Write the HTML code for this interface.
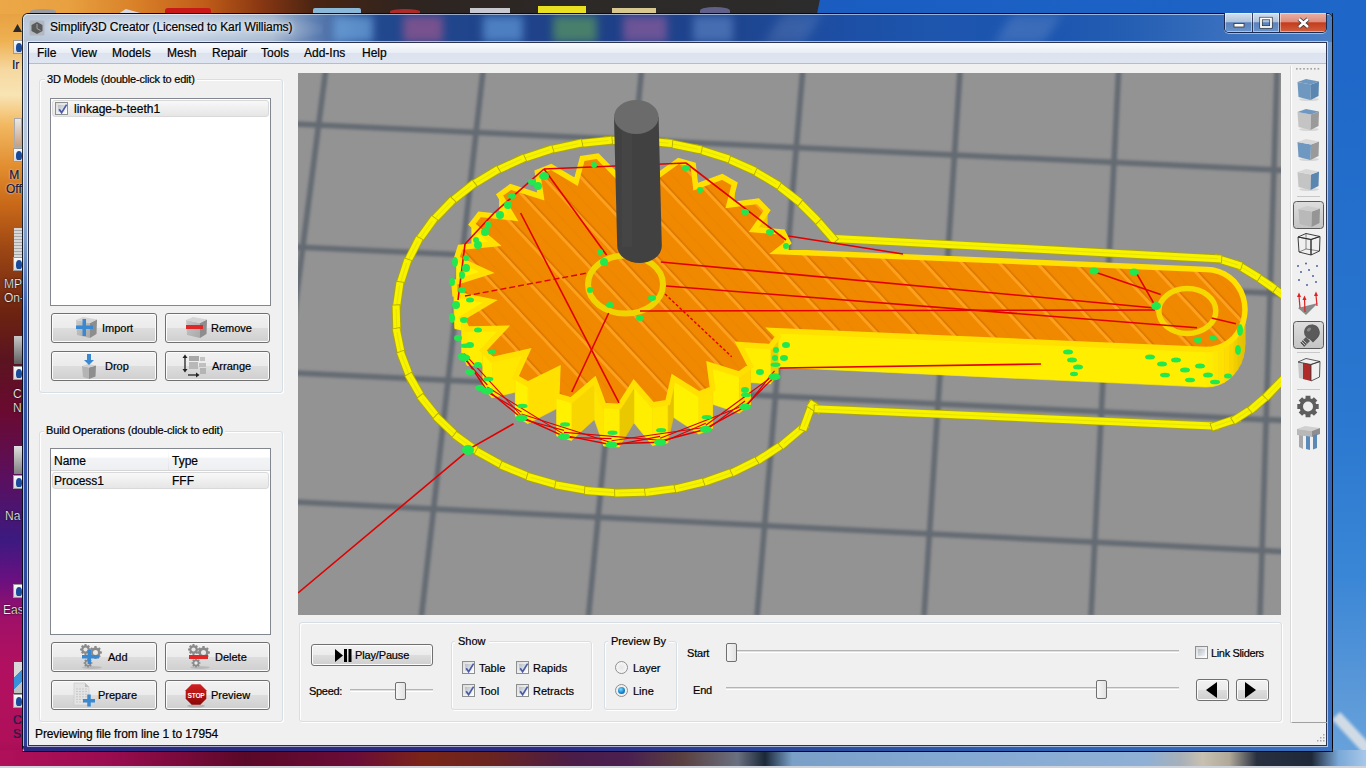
<!DOCTYPE html>
<html><head><meta charset="utf-8">
<style>
*{box-sizing:border-box}
html,body{margin:0;padding:0}
body{width:1366px;height:768px;overflow:hidden;position:relative;font-family:"Liberation Sans",sans-serif;font-size:12px;color:#000;background:#1b5fb8;-webkit-text-stroke:0.2px #000}
.a{position:absolute}
.t{position:absolute;white-space:nowrap;line-height:14px;font-size:12px}
#desk{left:0;top:0;width:1366px;height:768px;overflow:hidden}
#frame{left:22px;top:13px;width:1311px;height:739px;border-radius:7px 7px 4px 4px;border:1px solid #1a2a44;
  background:linear-gradient(90deg,#9fb2cc 0%,#7f98bd 20%,#3b69a8 40%,#2a5ca8 60%,#2f66b4 80%,#4d7fc2 100%)}
#client{left:28px;top:42px;width:1299px;height:704px;background:#f0f0f0;border:1px solid #2a3450;overflow:hidden}
.menu{left:0;top:0;width:1297px;height:21px;background:linear-gradient(#fafbfd,#e8edf5 50%,#dce3ee 51%,#dfe6f1);border-bottom:1px solid #b6bccc}
.grp{position:absolute;border:1px solid #d5dfe5;border-radius:3px;box-shadow:inset 1px 1px 0 #fff,1px 1px 0 #fff}
.lbl{position:absolute;background:#f0f0f0;padding:0 2px;white-space:nowrap;line-height:14px}
.list{position:absolute;background:#fff;border:1px solid #828790}
.btn{position:absolute;border:1px solid #707070;border-radius:3px;background:linear-gradient(#f2f2f2 0%,#ebebeb 50%,#dddddd 51%,#cfcfcf 100%);box-shadow:inset 0 0 0 1px #fcfcfc}
.btn span{position:absolute;white-space:nowrap;line-height:14px}
.cb{position:absolute;width:13px;height:13px;border:1px solid #8e8f8f;background:linear-gradient(135deg,#dcdcdc,#fff)}
.cb:after{content:"";position:absolute;left:2px;top:2px;width:7px;height:7px;background:linear-gradient(135deg,#b7bdc7,#f0f2f5)}
.chk{position:absolute;left:1px;top:0px}
</style></head>
<body>
<div id="desk" class="a">
  <!-- left strip -->
  <div class="a" style="left:0;top:0;width:40px;height:768px;background:linear-gradient(180deg,#e39a3c 0px,#eeb050 40px,#f6d8a0 70px,#f8e4b4 95px,#f2b860 125px,#e08a2c 170px,#c86818 205px,#9c4614 250px,#6e2410 310px,#5a1420 360px,#6a0a30 410px,#5a1060 480px,#3c1a80 540px,#6a1080 580px,#a01068 620px,#b01060 660px,#b0105a 740px,#9a0c50 768px)"></div>
  <div class="a" style="left:13px;top:24px;width:9px;height:8px;background:#2a2a2a;clip-path:polygon(50% 0,100% 100%,0 100%)"></div>
  <div class="a" style="left:13px;top:40px;width:10px;height:14px;background:linear-gradient(#fafafa,#d8d8d8);border:1px solid #9a9a9a"><div class="a" style="left:2px;top:2px;width:6px;height:9px;border-radius:50% 50% 40% 40%;background:#1a4a9a"></div></div>
  <div class="a" style="left:13px;top:148px;width:10px;height:14px;background:linear-gradient(#fafafa,#d8d8d8);border:1px solid #9a9a9a"><div class="a" style="left:2px;top:2px;width:6px;height:9px;border-radius:50% 50% 40% 40%;background:#1a4a9a"></div></div>
  <div class="a" style="left:13px;top:257px;width:10px;height:14px;background:linear-gradient(#fafafa,#d8d8d8);border:1px solid #9a9a9a"><div class="a" style="left:2px;top:2px;width:6px;height:9px;border-radius:50% 50% 40% 40%;background:#1a4a9a"></div></div>
  <div class="a" style="left:13px;top:366px;width:10px;height:14px;background:linear-gradient(#fafafa,#d8d8d8);border:1px solid #9a9a9a"><div class="a" style="left:2px;top:2px;width:6px;height:9px;border-radius:50% 50% 40% 40%;background:#1a4a9a"></div></div>
  <div class="a" style="left:13px;top:475px;width:10px;height:14px;background:linear-gradient(#fafafa,#d8d8d8);border:1px solid #9a9a9a"><div class="a" style="left:2px;top:2px;width:6px;height:9px;border-radius:50% 50% 40% 40%;background:#1a4a9a"></div></div>
  <div class="a" style="left:13px;top:584px;width:10px;height:14px;background:linear-gradient(#fafafa,#d8d8d8);border:1px solid #9a9a9a"><div class="a" style="left:2px;top:2px;width:6px;height:9px;border-radius:50% 50% 40% 40%;background:#1a4a9a"></div></div>
  <div class="a" style="left:13px;top:694px;width:10px;height:14px;background:linear-gradient(#fafafa,#d8d8d8);border:1px solid #9a9a9a"><div class="a" style="left:2px;top:2px;width:6px;height:9px;border-radius:50% 50% 40% 40%;background:#1a4a9a"></div></div>
  <div class="a" style="left:14px;top:118px;width:8px;height:29px;background:linear-gradient(#e8e8e8,#c8a080);border:1px solid #aaa"></div>
  <div class="a" style="left:14px;top:228px;width:8px;height:29px;background:repeating-linear-gradient(#d8d8d8 0 2px,#a8a8a8 2px 3px)"></div>
  <div class="a" style="left:14px;top:336px;width:8px;height:28px;background:linear-gradient(#c8c8c8,#606060)"></div>
  <div class="a" style="left:14px;top:446px;width:8px;height:28px;background:linear-gradient(#e0e0e0,#808080)"></div>
  <div class="a" style="left:14px;top:662px;width:8px;height:31px;background:linear-gradient(135deg,#d8d8d8 0,#d8d8d8 40%,#3a90d8 41%,#3a90d8 70%,#c0c0c0 71%)"></div>
  <div class="t" style="left:12px;top:58px;color:#1a2050;font-size:12px;text-shadow:0 0 2px #fff">Ir</div>
  <div class="t" style="left:6px;top:168px;color:#1a2050;font-size:12px;line-height:14px;text-shadow:0 0 2px #fff">&nbsp;M<br>Off</div>
  <div class="t" style="left:4px;top:277px;color:#fff;font-size:12px;line-height:14px;text-shadow:0 0 2px #000">MP<br>On-</div>
  <div class="t" style="left:13px;top:387px;color:#fff;font-size:12px;line-height:14px;text-shadow:0 0 2px #000">C<br>N</div>
  <div class="t" style="left:5px;top:509px;color:#fff;font-size:12px;text-shadow:0 0 2px #000">Na</div>
  <div class="t" style="left:3px;top:603px;color:#fff;font-size:12px;text-shadow:0 0 2px #000">Eas</div>
  <div class="t" style="left:13px;top:713px;color:#1a2a60;font-size:12px;line-height:14px">C<br>S</div>
  <!-- top strip -->
  <div class="a" style="left:0;top:0;width:1366px;height:14px;background:linear-gradient(90deg,#eca848 0%,#e8a040 5%,#d88028 10%,#c05c18 15%,#8a3812 19%,#4a2412 23%,#2e2420 30%,#2c2a28 45%,#2c2c2c 62%,#2a2a2a 100%)"></div>
  <div class="a" style="left:800px;top:0;width:566px;height:14px;background:linear-gradient(90deg,#1a5cc0,#1e66c8);clip-path:polygon(3% 100%,3.5% 0,100% 0,100% 100%)"></div>
  <!-- top icons peeking -->
  <div class="a" style="left:30px;top:9px;width:26px;height:5px;background:#9a9aa0;border-radius:50% 50% 0 0"></div>
  <div class="a" style="left:118px;top:9px;width:26px;height:5px;background:#d8d8e0;clip-path:polygon(30% 0,100% 100%,0 100%)"></div>
  <div class="a" style="left:165px;top:8px;width:46px;height:6px;background:#c81818;border-radius:3px 3px 0 0"></div>
  <div class="a" style="left:313px;top:8px;width:48px;height:6px;background:#8ab8d8;border-radius:2px 2px 0 0"></div>
  <div class="a" style="left:390px;top:9px;width:30px;height:5px;background:#b02a2a;border-radius:50% 50% 0 0"></div>
  <div class="a" style="left:470px;top:8px;width:40px;height:6px;background:#c8c8d0"></div>
  <div class="a" style="left:538px;top:6px;width:48px;height:8px;background:#e8e020"></div>
  <div class="a" style="left:612px;top:8px;width:44px;height:6px;background:#d8c890"></div>
  <div class="a" style="left:700px;top:7px;width:30px;height:7px;background:#606088;border-radius:50% 50% 0 0"></div>
  <!-- right strip -->
  <div class="a" style="left:1330px;top:0;width:36px;height:768px;background:linear-gradient(180deg,#1e66c8 0%,#1e66c8 4%,#2470cc 30%,#2a78d0 55%,#3a86d6 75%,#5a98d8 90%,#6aa4dc 100%)"></div>
  <div class="a" style="left:1340px;top:712px;width:60px;height:11px;background:#dde2e8;transform:rotate(47deg);transform-origin:0 0;opacity:0.9;filter:blur(1.5px)"></div>
  <!-- bottom strip -->
  <div class="a" style="left:0;top:750px;width:1366px;height:18px;background:linear-gradient(90deg,#b0105a 0%,#9a0c50 8%,#5a0828 18%,#6a0c38 26%,#7a2418 31%,#6a2420 36%,#4a1c48 42%,#4a2050 46%,#5a4040 50%,#6a7080 54%,#1a2838 56%,#7aa0c8 58%,#80a6d0 66%,#88acd4 75%,#90b0d4 84%,#a8b0b8 86.5%,#c8c0b0 88%,#b0a898 90%,#283040 92%,#1e2838 96%,#7aa8d8 98%,#a8c8e8 100%)"></div>
  <div class="a" style="left:0;top:766px;width:1366px;height:2px;background:#d0d4dc"></div>
</div>

<!-- WINDOW FRAME -->
<div class="a" style="left:22px;top:13px;width:1311px;height:739px;border-radius:6px 6px 5px 5px;border:1px solid rgba(0,0,0,0.8);overflow:hidden;background:linear-gradient(180deg,#b8c8dc 0px,#c0cee0 29px,#b8c8dc 120px,#90a8cc 190px,#4a6cb0 260px,#2c4c98 330px,#2a4090 450px,#2c3a8c 600px,#2a3488 739px)">
  <div class="a" style="left:0;top:0;width:1311px;height:30px;background:linear-gradient(90deg,#b8c6d8 0%,#b0c0d6 12%,#a2b4cc 19%,#5a7cb0 22.5%,#22488e 26%,#1e4088 45%,#1e4690 55%,#1c4ea4 62%,#1e56ae 70%,#1a54ae 78%,#2660b4 85%,#3a70be 92%,#4a7ec4 100%)"></div>
  <div class="a" style="left:295px;top:0px;width:420px;height:30px;filter:blur(4px)">
    <div class="a" style="left:15px;top:2px;width:40px;height:26px;background:#70a8e0;opacity:0.7"></div>
    <div class="a" style="left:85px;top:2px;width:40px;height:26px;background:#b05a90;opacity:0.6"></div>
    <div class="a" style="left:165px;top:2px;width:40px;height:26px;background:#6098d8;opacity:0.7"></div>
    <div class="a" style="left:235px;top:2px;width:44px;height:26px;background:#5a9a60;opacity:0.7"></div>
    <div class="a" style="left:305px;top:2px;width:44px;height:26px;background:#a060a0;opacity:0.6"></div>
    <div class="a" style="left:375px;top:2px;width:40px;height:26px;background:#6088c8;opacity:0.6"></div>
  </div>
  <div class="a" style="left:0;top:0;width:300px;height:30px;background:radial-gradient(ellipse 170px 18px at 140px 15px,rgba(230,238,248,0.75),rgba(230,238,248,0))"></div>
  <div class="a" style="left:0;top:0;width:1311px;height:739px;border:1px solid rgba(255,255,255,0.55);border-radius:5px 5px 4px 4px"></div>
  <div class="a" style="left:750px;top:0;width:40px;height:30px;background:rgba(255,255,255,0.12);transform:skewX(-30deg);filter:blur(6px)"></div>
  <div class="a" style="left:980px;top:0;width:50px;height:30px;background:rgba(255,255,255,0.14);transform:skewX(-30deg);filter:blur(6px)"></div>
</div>
<div class="a" style="left:23px;top:42px;width:5px;height:709px;background:linear-gradient(180deg,#c0cfe2 0%,#b4c6dc 15%,#7e9cc8 28%,#3a60b0 38%,#2e50a4 55%,#2c4aa0 75%,#2a3e94 100%);box-shadow:inset 1px 0 0 rgba(255,255,255,0.6),inset -1px 0 0 rgba(255,255,255,0.35)"></div>
<div class="a" style="left:1327px;top:42px;width:5px;height:709px;background:linear-gradient(180deg,#6a94cc 0%,#3a6cb8 30%,#2e62b4 70%,#3a70c0 100%)"></div>
<div class="a" style="left:23px;top:746px;width:1309px;height:5px;border-radius:0 0 4px 4px;background:linear-gradient(90deg,#2a2a80 0%,#2c2c84 40%,#2a4a9c 60%,#2e62b4 80%,#3a70c0 100%)"></div>
<div class="a" style="left:1332px;top:13px;width:1px;height:739px;background:rgba(0,0,0,0.75)"></div>
<div class="a" style="left:22px;top:751px;width:1311px;height:1px;background:rgba(0,0,0,0.75);border-radius:0 0 4px 4px"></div>
<div class="a" style="left:27px;top:41px;width:1301px;height:706px;border:1px solid rgba(255,255,255,0.6)"></div>

<!-- title -->
<svg class="a" style="left:29px;top:20px" width="16" height="16"><rect x="0.5" y="0.5" width="15" height="15" rx="1.5" fill="#a8a8a8" opacity="0.55"/><polygon points="8,2 13.5,5 13.5,11 8,14 2.5,11 2.5,5" fill="#5a5a5a"/><path d="M8,4 V8.5 L11.5,10.5" stroke="#b0b0b0" stroke-width="0.9" fill="none"/></svg>
<div class="t" style="left:50px;top:20px;font-size:12px;letter-spacing:-0.08px;color:#000;text-shadow:0 0 6px rgba(255,255,255,0.9),0 0 3px rgba(255,255,255,0.8)">Simplify3D Creator (Licensed to Karl Williams)</div>
<!-- caption buttons -->
<div class="a" style="left:1224px;top:13px;width:103px;height:20px;border:1px solid rgba(20,30,60,0.85);border-top:none;border-radius:0 0 5px 5px;overflow:hidden;box-shadow:0 1px 0 rgba(255,255,255,0.5)">
  <div class="a" style="left:0;top:0;width:28px;height:19px;background:linear-gradient(#d4e0ee 0%,#aec2dc 45%,#5a82bc 52%,#6a94cc 100%);border-right:1px solid rgba(20,30,60,0.8);box-shadow:inset 0 0 0 1px rgba(255,255,255,0.45)"></div>
  <div class="a" style="left:28px;top:0;width:27px;height:19px;background:linear-gradient(#d4e0ee 0%,#aec2dc 45%,#5a82bc 52%,#6a94cc 100%);border-right:1px solid rgba(60,20,20,0.8);box-shadow:inset 0 0 0 1px rgba(255,255,255,0.45)"></div>
  <div class="a" style="left:55px;top:0;width:47px;height:19px;background:linear-gradient(#eab0a4 0%,#dc8e80 45%,#c43c1c 52%,#d06040 100%);box-shadow:inset 0 0 0 1px rgba(255,255,255,0.45)"></div>
</div>
<svg class="a" style="left:1224px;top:13px" width="103" height="20">
  <rect x="10" y="10.5" width="10" height="3.5" fill="#fff" stroke="#333" stroke-width="0.8"/>
  <rect x="37" y="5.5" width="10" height="8.5" fill="none" stroke="#333" stroke-width="3.2"/>
  <rect x="37" y="5.5" width="10" height="8.5" fill="none" stroke="#fff" stroke-width="1.8"/>
  <path d="M75,6 L84,14 M84,6 L75,14" stroke="#333" stroke-width="4.2"/>
  <path d="M75,6 L84,14 M84,6 L75,14" stroke="#fff" stroke-width="2.6"/>
</svg>

<div id="client" class="a"></div>
<div class="menu a" style="left:29px;top:43px"></div>
<div class="t" style="left:37px;top:46px">File</div>
<div class="t" style="left:71px;top:46px">View</div>
<div class="t" style="left:112px;top:46px">Models</div>
<div class="t" style="left:167px;top:46px">Mesh</div>
<div class="t" style="left:212px;top:46px">Repair</div>
<div class="t" style="left:261px;top:46px">Tools</div>
<div class="t" style="left:304px;top:46px">Add-Ins</div>
<div class="t" style="left:362px;top:46px">Help</div>

<!-- LEFT PANEL -->
<div class="grp" style="left:39px;top:79px;width:244px;height:314px"></div>
<div class="lbl" style="left:45px;top:72px;font-size:11px;letter-spacing:-0.2px">3D Models (double-click to edit)</div>
<div class="list" style="left:50px;top:98px;width:221px;height:208px"></div>
<div class="a" style="left:52px;top:100px;width:217px;height:17px;border:1px solid #d9d9d9;border-radius:3px;background:linear-gradient(#f8f8f8,#e6e6e6)"></div>
<div class="cb" style="left:55px;top:102px"><svg class="a" style="left:1px;top:0px;z-index:2" width="12" height="12"><path d="M2.2,6.2 L4.6,9.6 L9.6,1.6" fill="none" stroke="#4a5aa8" stroke-width="1.7"/></svg></div>
<div class="t" style="left:74px;top:102px">linkage-b-teeth1</div>

<div class="btn" style="left:51px;top:313px;width:106px;height:30px"><span style="left:50px;top:7px;font-size:11px">Import</span></div>
<div class="btn" style="left:165px;top:313px;width:105px;height:30px"><span style="left:45px;top:7px;font-size:11px">Remove</span></div>
<div class="btn" style="left:51px;top:351px;width:106px;height:30px"><span style="left:53px;top:7px;font-size:11px">Drop</span></div>
<div class="btn" style="left:165px;top:351px;width:105px;height:30px"><span style="left:46px;top:7px;font-size:11px">Arrange</span></div>

<div class="grp" style="left:39px;top:431px;width:244px;height:291px"></div>
<div class="lbl" style="left:44px;top:423px;font-size:11px;letter-spacing:-0.15px">Build Operations (double-click to edit)</div>
<div class="list" style="left:50px;top:448px;width:221px;height:187px"></div>
<div class="a" style="left:51px;top:449px;width:219px;height:22px;background:linear-gradient(#ffffff 0%,#ffffff 40%,#f3f4f6 41%,#eeeff2 100%);border-bottom:1px solid #d5d5d5"></div>
<div class="a" style="left:168px;top:449px;width:1px;height:21px;background:linear-gradient(#fff,#e0e2e6)"></div>
<div class="t" style="left:54px;top:454px;font-size:12px">Name</div>
<div class="t" style="left:172px;top:454px;font-size:12px">Type</div>
<div class="a" style="left:52px;top:472px;width:217px;height:17px;border:1px solid #d9d9d9;border-radius:3px;background:linear-gradient(#f8f8f8,#e6e6e6)"></div>
<div class="t" style="left:54px;top:474px;font-size:12px">Process1</div>
<div class="t" style="left:172px;top:474px;font-size:12px">FFF</div>

<div class="btn" style="left:51px;top:642px;width:106px;height:30px"><span style="left:56px;top:7px;font-size:11px">Add</span></div>
<div class="btn" style="left:165px;top:642px;width:105px;height:30px"><span style="left:49px;top:7px;font-size:11px">Delete</span></div>
<div class="btn" style="left:51px;top:680px;width:106px;height:30px"><span style="left:46px;top:7px;font-size:11px">Prepare</span></div>
<div class="btn" style="left:165px;top:680px;width:105px;height:30px"><span style="left:45px;top:7px;font-size:11px">Preview</span></div>

<div class="t" style="left:35px;top:727px;font-size:12px;letter-spacing:-0.1px">Previewing file from line 1 to 17954</div>

<!-- VIEWPORT -->
<div class="a" id="vp" style="left:298px;top:73px;width:983px;height:542px;background:#939393;overflow:hidden"></div>
<!--SCENE--><svg class="a" style="left:298px;top:73px" width="983" height="542" viewBox="298 73 983 542"><defs><filter id="bl" x="-5%" y="-5%" width="110%" height="110%"><feGaussianBlur stdDeviation="1.5"/></filter><pattern id="inf" patternUnits="userSpaceOnUse" width="27.5" height="27.5" patternTransform="rotate(-43)"><rect width="27.5" height="27.5" fill="#f08800"/><rect width="3" height="27.5" fill="#fda01c"/><rect x="3" width="1.4" height="27.5" fill="#d87400"/><rect x="14" width="1" height="27.5" fill="#e88200" opacity="0.6"/></pattern></defs><g stroke="#646a72" stroke-width="5.5" filter="url(#bl)"><line x1="325.6" y1="71" x2="255" y2="616"/><line x1="483" y1="71" x2="421.5" y2="616"/><line x1="641.5" y1="71" x2="588.5" y2="616"/><line x1="802.7" y1="71" x2="757" y2="616"/><line x1="960" y1="71" x2="924" y2="616"/><line x1="1118.6" y1="71" x2="1091" y2="616"/><line x1="1277" y1="71" x2="1260" y2="616"/><line x1="296" y1="124" x2="1290" y2="170.7"/><line x1="296" y1="247" x2="1290" y2="294"/><line x1="296" y1="373" x2="1290" y2="420.8"/><line x1="296" y1="502" x2="1290" y2="552"/></g><line x1="1292.0" y1="302.0" x2="1272.0" y2="287.0" stroke="#b0a800" stroke-width="8.6" stroke-linecap="square"/><line x1="1292.0" y1="302.0" x2="1272.0" y2="287.0" stroke="#f6f200" stroke-width="7" stroke-linecap="square"/><line x1="1292.0" y1="302.0" x2="1272.0" y2="287.0" stroke="#d8d000" stroke-width="0.8" opacity="0.6"/><line x1="1272.0" y1="287.0" x2="1256.0" y2="276.0" stroke="#b0a800" stroke-width="8.6" stroke-linecap="square"/><line x1="1272.0" y1="287.0" x2="1256.0" y2="276.0" stroke="#f6f200" stroke-width="7" stroke-linecap="square"/><line x1="1272.0" y1="287.0" x2="1256.0" y2="276.0" stroke="#d8d000" stroke-width="0.8" opacity="0.6"/><line x1="1256.0" y1="276.0" x2="1238.0" y2="265.0" stroke="#b0a800" stroke-width="8.6" stroke-linecap="square"/><line x1="1256.0" y1="276.0" x2="1238.0" y2="265.0" stroke="#f6f200" stroke-width="7" stroke-linecap="square"/><line x1="1256.0" y1="276.0" x2="1238.0" y2="265.0" stroke="#d8d000" stroke-width="0.8" opacity="0.6"/><line x1="1238.0" y1="265.0" x2="1217.8" y2="258.7" stroke="#b0a800" stroke-width="8.6" stroke-linecap="square"/><line x1="1238.0" y1="265.0" x2="1217.8" y2="258.7" stroke="#f6f200" stroke-width="7" stroke-linecap="square"/><line x1="1238.0" y1="265.0" x2="1217.8" y2="258.7" stroke="#d8d000" stroke-width="0.8" opacity="0.6"/><line x1="1217.8" y1="258.7" x2="833.0" y2="238.5" stroke="#b0a800" stroke-width="8.6" stroke-linecap="square"/><line x1="1217.8" y1="258.7" x2="833.0" y2="238.5" stroke="#f6f200" stroke-width="7" stroke-linecap="square"/><line x1="1217.8" y1="258.7" x2="833.0" y2="238.5" stroke="#d8d000" stroke-width="0.8" opacity="0.6"/><line x1="833.0" y1="238.5" x2="815.8" y2="218.9" stroke="#b0a800" stroke-width="8.6" stroke-linecap="square"/><line x1="833.0" y1="238.5" x2="815.8" y2="218.9" stroke="#f6f200" stroke-width="7" stroke-linecap="square"/><line x1="833.0" y1="238.5" x2="815.8" y2="218.9" stroke="#d8d000" stroke-width="0.8" opacity="0.6"/><line x1="815.8" y1="218.9" x2="797.4" y2="200.4" stroke="#b0a800" stroke-width="8.6" stroke-linecap="square"/><line x1="815.8" y1="218.9" x2="797.4" y2="200.4" stroke="#f6f200" stroke-width="7" stroke-linecap="square"/><line x1="815.8" y1="218.9" x2="797.4" y2="200.4" stroke="#d8d000" stroke-width="0.8" opacity="0.6"/><line x1="797.4" y1="200.4" x2="776.1" y2="183.9" stroke="#b0a800" stroke-width="8.6" stroke-linecap="square"/><line x1="797.4" y1="200.4" x2="776.1" y2="183.9" stroke="#f6f200" stroke-width="7" stroke-linecap="square"/><line x1="797.4" y1="200.4" x2="776.1" y2="183.9" stroke="#d8d000" stroke-width="0.8" opacity="0.6"/><line x1="776.1" y1="183.9" x2="752.1" y2="169.7" stroke="#b0a800" stroke-width="8.6" stroke-linecap="square"/><line x1="776.1" y1="183.9" x2="752.1" y2="169.7" stroke="#f6f200" stroke-width="7" stroke-linecap="square"/><line x1="776.1" y1="183.9" x2="752.1" y2="169.7" stroke="#d8d000" stroke-width="0.8" opacity="0.6"/><line x1="752.1" y1="169.7" x2="725.8" y2="158.0" stroke="#b0a800" stroke-width="8.6" stroke-linecap="square"/><line x1="752.1" y1="169.7" x2="725.8" y2="158.0" stroke="#f6f200" stroke-width="7" stroke-linecap="square"/><line x1="752.1" y1="169.7" x2="725.8" y2="158.0" stroke="#d8d000" stroke-width="0.8" opacity="0.6"/><line x1="725.8" y1="158.0" x2="697.9" y2="149.2" stroke="#b0a800" stroke-width="8.6" stroke-linecap="square"/><line x1="725.8" y1="158.0" x2="697.9" y2="149.2" stroke="#f6f200" stroke-width="7" stroke-linecap="square"/><line x1="725.8" y1="158.0" x2="697.9" y2="149.2" stroke="#d8d000" stroke-width="0.8" opacity="0.6"/><line x1="697.9" y1="149.2" x2="668.6" y2="143.2" stroke="#b0a800" stroke-width="8.6" stroke-linecap="square"/><line x1="697.9" y1="149.2" x2="668.6" y2="143.2" stroke="#f6f200" stroke-width="7" stroke-linecap="square"/><line x1="697.9" y1="149.2" x2="668.6" y2="143.2" stroke="#d8d000" stroke-width="0.8" opacity="0.6"/><line x1="668.6" y1="143.2" x2="638.6" y2="140.3" stroke="#b0a800" stroke-width="8.6" stroke-linecap="square"/><line x1="668.6" y1="143.2" x2="638.6" y2="140.3" stroke="#f6f200" stroke-width="7" stroke-linecap="square"/><line x1="668.6" y1="143.2" x2="638.6" y2="140.3" stroke="#d8d000" stroke-width="0.8" opacity="0.6"/><line x1="638.6" y1="140.3" x2="608.3" y2="140.5" stroke="#b0a800" stroke-width="8.6" stroke-linecap="square"/><line x1="638.6" y1="140.3" x2="608.3" y2="140.5" stroke="#f6f200" stroke-width="7" stroke-linecap="square"/><line x1="638.6" y1="140.3" x2="608.3" y2="140.5" stroke="#d8d000" stroke-width="0.8" opacity="0.6"/><line x1="608.3" y1="140.5" x2="578.4" y2="143.7" stroke="#b0a800" stroke-width="8.6" stroke-linecap="square"/><line x1="608.3" y1="140.5" x2="578.4" y2="143.7" stroke="#f6f200" stroke-width="7" stroke-linecap="square"/><line x1="608.3" y1="140.5" x2="578.4" y2="143.7" stroke="#d8d000" stroke-width="0.8" opacity="0.6"/><line x1="578.4" y1="143.7" x2="549.2" y2="149.9" stroke="#b0a800" stroke-width="8.6" stroke-linecap="square"/><line x1="578.4" y1="143.7" x2="549.2" y2="149.9" stroke="#f6f200" stroke-width="7" stroke-linecap="square"/><line x1="578.4" y1="143.7" x2="549.2" y2="149.9" stroke="#d8d000" stroke-width="0.8" opacity="0.6"/><line x1="549.2" y1="149.9" x2="521.4" y2="159.1" stroke="#b0a800" stroke-width="8.6" stroke-linecap="square"/><line x1="549.2" y1="149.9" x2="521.4" y2="159.1" stroke="#f6f200" stroke-width="7" stroke-linecap="square"/><line x1="549.2" y1="149.9" x2="521.4" y2="159.1" stroke="#d8d000" stroke-width="0.8" opacity="0.6"/><line x1="521.4" y1="159.1" x2="495.4" y2="171.0" stroke="#b0a800" stroke-width="8.6" stroke-linecap="square"/><line x1="521.4" y1="159.1" x2="495.4" y2="171.0" stroke="#f6f200" stroke-width="7" stroke-linecap="square"/><line x1="521.4" y1="159.1" x2="495.4" y2="171.0" stroke="#d8d000" stroke-width="0.8" opacity="0.6"/><line x1="495.4" y1="171.0" x2="471.6" y2="185.4" stroke="#b0a800" stroke-width="8.6" stroke-linecap="square"/><line x1="495.4" y1="171.0" x2="471.6" y2="185.4" stroke="#f6f200" stroke-width="7" stroke-linecap="square"/><line x1="495.4" y1="171.0" x2="471.6" y2="185.4" stroke="#d8d000" stroke-width="0.8" opacity="0.6"/><line x1="471.6" y1="185.4" x2="450.5" y2="202.2" stroke="#b0a800" stroke-width="8.6" stroke-linecap="square"/><line x1="471.6" y1="185.4" x2="450.5" y2="202.2" stroke="#f6f200" stroke-width="7" stroke-linecap="square"/><line x1="471.6" y1="185.4" x2="450.5" y2="202.2" stroke="#d8d000" stroke-width="0.8" opacity="0.6"/><line x1="450.5" y1="202.2" x2="432.5" y2="220.9" stroke="#b0a800" stroke-width="8.6" stroke-linecap="square"/><line x1="450.5" y1="202.2" x2="432.5" y2="220.9" stroke="#f6f200" stroke-width="7" stroke-linecap="square"/><line x1="450.5" y1="202.2" x2="432.5" y2="220.9" stroke="#d8d000" stroke-width="0.8" opacity="0.6"/><line x1="432.5" y1="220.9" x2="417.8" y2="241.3" stroke="#b0a800" stroke-width="8.6" stroke-linecap="square"/><line x1="432.5" y1="220.9" x2="417.8" y2="241.3" stroke="#f6f200" stroke-width="7" stroke-linecap="square"/><line x1="432.5" y1="220.9" x2="417.8" y2="241.3" stroke="#d8d000" stroke-width="0.8" opacity="0.6"/><line x1="417.8" y1="241.3" x2="406.8" y2="263.0" stroke="#b0a800" stroke-width="8.6" stroke-linecap="square"/><line x1="417.8" y1="241.3" x2="406.8" y2="263.0" stroke="#f6f200" stroke-width="7" stroke-linecap="square"/><line x1="417.8" y1="241.3" x2="406.8" y2="263.0" stroke="#d8d000" stroke-width="0.8" opacity="0.6"/><line x1="406.8" y1="263.0" x2="399.5" y2="285.6" stroke="#b0a800" stroke-width="8.6" stroke-linecap="square"/><line x1="406.8" y1="263.0" x2="399.5" y2="285.6" stroke="#f6f200" stroke-width="7" stroke-linecap="square"/><line x1="406.8" y1="263.0" x2="399.5" y2="285.6" stroke="#d8d000" stroke-width="0.8" opacity="0.6"/><line x1="399.5" y1="285.6" x2="396.2" y2="308.8" stroke="#b0a800" stroke-width="8.6" stroke-linecap="square"/><line x1="399.5" y1="285.6" x2="396.2" y2="308.8" stroke="#f6f200" stroke-width="7" stroke-linecap="square"/><line x1="399.5" y1="285.6" x2="396.2" y2="308.8" stroke="#d8d000" stroke-width="0.8" opacity="0.6"/><line x1="396.2" y1="308.8" x2="396.9" y2="332.1" stroke="#b0a800" stroke-width="8.6" stroke-linecap="square"/><line x1="396.2" y1="308.8" x2="396.9" y2="332.1" stroke="#f6f200" stroke-width="7" stroke-linecap="square"/><line x1="396.2" y1="308.8" x2="396.9" y2="332.1" stroke="#d8d000" stroke-width="0.8" opacity="0.6"/><line x1="396.9" y1="332.1" x2="401.6" y2="355.2" stroke="#b0a800" stroke-width="8.6" stroke-linecap="square"/><line x1="396.9" y1="332.1" x2="401.6" y2="355.2" stroke="#f6f200" stroke-width="7" stroke-linecap="square"/><line x1="396.9" y1="332.1" x2="401.6" y2="355.2" stroke="#d8d000" stroke-width="0.8" opacity="0.6"/><line x1="401.6" y1="355.2" x2="410.1" y2="377.5" stroke="#b0a800" stroke-width="8.6" stroke-linecap="square"/><line x1="401.6" y1="355.2" x2="410.1" y2="377.5" stroke="#f6f200" stroke-width="7" stroke-linecap="square"/><line x1="401.6" y1="355.2" x2="410.1" y2="377.5" stroke="#d8d000" stroke-width="0.8" opacity="0.6"/><line x1="410.1" y1="377.5" x2="422.4" y2="398.8" stroke="#b0a800" stroke-width="8.6" stroke-linecap="square"/><line x1="410.1" y1="377.5" x2="422.4" y2="398.8" stroke="#f6f200" stroke-width="7" stroke-linecap="square"/><line x1="410.1" y1="377.5" x2="422.4" y2="398.8" stroke="#d8d000" stroke-width="0.8" opacity="0.6"/><line x1="422.4" y1="398.8" x2="438.3" y2="418.7" stroke="#b0a800" stroke-width="8.6" stroke-linecap="square"/><line x1="422.4" y1="398.8" x2="438.3" y2="418.7" stroke="#f6f200" stroke-width="7" stroke-linecap="square"/><line x1="422.4" y1="398.8" x2="438.3" y2="418.7" stroke="#d8d000" stroke-width="0.8" opacity="0.6"/><line x1="438.3" y1="418.7" x2="457.4" y2="436.8" stroke="#b0a800" stroke-width="8.6" stroke-linecap="square"/><line x1="438.3" y1="418.7" x2="457.4" y2="436.8" stroke="#f6f200" stroke-width="7" stroke-linecap="square"/><line x1="438.3" y1="418.7" x2="457.4" y2="436.8" stroke="#d8d000" stroke-width="0.8" opacity="0.6"/><line x1="457.4" y1="436.8" x2="479.4" y2="452.7" stroke="#b0a800" stroke-width="8.6" stroke-linecap="square"/><line x1="457.4" y1="436.8" x2="479.4" y2="452.7" stroke="#f6f200" stroke-width="7" stroke-linecap="square"/><line x1="457.4" y1="436.8" x2="479.4" y2="452.7" stroke="#d8d000" stroke-width="0.8" opacity="0.6"/><line x1="479.4" y1="452.7" x2="504.0" y2="466.3" stroke="#b0a800" stroke-width="8.6" stroke-linecap="square"/><line x1="479.4" y1="452.7" x2="504.0" y2="466.3" stroke="#f6f200" stroke-width="7" stroke-linecap="square"/><line x1="479.4" y1="452.7" x2="504.0" y2="466.3" stroke="#d8d000" stroke-width="0.8" opacity="0.6"/><line x1="504.0" y1="466.3" x2="530.7" y2="477.3" stroke="#b0a800" stroke-width="8.6" stroke-linecap="square"/><line x1="504.0" y1="466.3" x2="530.7" y2="477.3" stroke="#f6f200" stroke-width="7" stroke-linecap="square"/><line x1="504.0" y1="466.3" x2="530.7" y2="477.3" stroke="#d8d000" stroke-width="0.8" opacity="0.6"/><line x1="530.7" y1="477.3" x2="559.0" y2="485.5" stroke="#b0a800" stroke-width="8.6" stroke-linecap="square"/><line x1="530.7" y1="477.3" x2="559.0" y2="485.5" stroke="#f6f200" stroke-width="7" stroke-linecap="square"/><line x1="530.7" y1="477.3" x2="559.0" y2="485.5" stroke="#d8d000" stroke-width="0.8" opacity="0.6"/><line x1="559.0" y1="485.5" x2="588.5" y2="490.7" stroke="#b0a800" stroke-width="8.6" stroke-linecap="square"/><line x1="559.0" y1="485.5" x2="588.5" y2="490.7" stroke="#f6f200" stroke-width="7" stroke-linecap="square"/><line x1="559.0" y1="485.5" x2="588.5" y2="490.7" stroke="#d8d000" stroke-width="0.8" opacity="0.6"/><line x1="588.5" y1="490.7" x2="618.6" y2="492.9" stroke="#b0a800" stroke-width="8.6" stroke-linecap="square"/><line x1="588.5" y1="490.7" x2="618.6" y2="492.9" stroke="#f6f200" stroke-width="7" stroke-linecap="square"/><line x1="588.5" y1="490.7" x2="618.6" y2="492.9" stroke="#d8d000" stroke-width="0.8" opacity="0.6"/><line x1="618.6" y1="492.9" x2="648.8" y2="492.0" stroke="#b0a800" stroke-width="8.6" stroke-linecap="square"/><line x1="618.6" y1="492.9" x2="648.8" y2="492.0" stroke="#f6f200" stroke-width="7" stroke-linecap="square"/><line x1="618.6" y1="492.9" x2="648.8" y2="492.0" stroke="#d8d000" stroke-width="0.8" opacity="0.6"/><line x1="648.8" y1="492.0" x2="678.7" y2="488.1" stroke="#b0a800" stroke-width="8.6" stroke-linecap="square"/><line x1="648.8" y1="492.0" x2="678.7" y2="488.1" stroke="#f6f200" stroke-width="7" stroke-linecap="square"/><line x1="648.8" y1="492.0" x2="678.7" y2="488.1" stroke="#d8d000" stroke-width="0.8" opacity="0.6"/><line x1="678.7" y1="488.1" x2="707.5" y2="481.1" stroke="#b0a800" stroke-width="8.6" stroke-linecap="square"/><line x1="678.7" y1="488.1" x2="707.5" y2="481.1" stroke="#f6f200" stroke-width="7" stroke-linecap="square"/><line x1="678.7" y1="488.1" x2="707.5" y2="481.1" stroke="#d8d000" stroke-width="0.8" opacity="0.6"/><line x1="707.5" y1="481.1" x2="735.0" y2="471.3" stroke="#b0a800" stroke-width="8.6" stroke-linecap="square"/><line x1="707.5" y1="481.1" x2="735.0" y2="471.3" stroke="#f6f200" stroke-width="7" stroke-linecap="square"/><line x1="707.5" y1="481.1" x2="735.0" y2="471.3" stroke="#d8d000" stroke-width="0.8" opacity="0.6"/><line x1="735.0" y1="471.3" x2="760.5" y2="458.8" stroke="#b0a800" stroke-width="8.6" stroke-linecap="square"/><line x1="735.0" y1="471.3" x2="760.5" y2="458.8" stroke="#f6f200" stroke-width="7" stroke-linecap="square"/><line x1="735.0" y1="471.3" x2="760.5" y2="458.8" stroke="#d8d000" stroke-width="0.8" opacity="0.6"/><line x1="760.5" y1="458.8" x2="783.6" y2="443.8" stroke="#b0a800" stroke-width="8.6" stroke-linecap="square"/><line x1="760.5" y1="458.8" x2="783.6" y2="443.8" stroke="#f6f200" stroke-width="7" stroke-linecap="square"/><line x1="760.5" y1="458.8" x2="783.6" y2="443.8" stroke="#d8d000" stroke-width="0.8" opacity="0.6"/><line x1="783.6" y1="443.8" x2="804.0" y2="426.6" stroke="#b0a800" stroke-width="8.6" stroke-linecap="square"/><line x1="783.6" y1="443.8" x2="804.0" y2="426.6" stroke="#f6f200" stroke-width="7" stroke-linecap="square"/><line x1="783.6" y1="443.8" x2="804.0" y2="426.6" stroke="#d8d000" stroke-width="0.8" opacity="0.6"/><line x1="804.0" y1="426.6" x2="812.0" y2="405.0" stroke="#b0a800" stroke-width="8.6" stroke-linecap="square"/><line x1="804.0" y1="426.6" x2="812.0" y2="405.0" stroke="#f6f200" stroke-width="7" stroke-linecap="square"/><line x1="804.0" y1="426.6" x2="812.0" y2="405.0" stroke="#d8d000" stroke-width="0.8" opacity="0.6"/><line x1="812.0" y1="405.0" x2="818.0" y2="409.0" stroke="#b0a800" stroke-width="8.6" stroke-linecap="square"/><line x1="812.0" y1="405.0" x2="818.0" y2="409.0" stroke="#f6f200" stroke-width="7" stroke-linecap="square"/><line x1="812.0" y1="405.0" x2="818.0" y2="409.0" stroke="#d8d000" stroke-width="0.8" opacity="0.6"/><line x1="818.0" y1="409.0" x2="1215.0" y2="426.0" stroke="#b0a800" stroke-width="8.6" stroke-linecap="square"/><line x1="818.0" y1="409.0" x2="1215.0" y2="426.0" stroke="#f6f200" stroke-width="7" stroke-linecap="square"/><line x1="818.0" y1="409.0" x2="1215.0" y2="426.0" stroke="#d8d000" stroke-width="0.8" opacity="0.6"/><line x1="1215.0" y1="426.0" x2="1236.0" y2="419.0" stroke="#b0a800" stroke-width="8.6" stroke-linecap="square"/><line x1="1215.0" y1="426.0" x2="1236.0" y2="419.0" stroke="#f6f200" stroke-width="7" stroke-linecap="square"/><line x1="1215.0" y1="426.0" x2="1236.0" y2="419.0" stroke="#d8d000" stroke-width="0.8" opacity="0.6"/><line x1="1236.0" y1="419.0" x2="1253.0" y2="408.0" stroke="#b0a800" stroke-width="8.6" stroke-linecap="square"/><line x1="1236.0" y1="419.0" x2="1253.0" y2="408.0" stroke="#f6f200" stroke-width="7" stroke-linecap="square"/><line x1="1236.0" y1="419.0" x2="1253.0" y2="408.0" stroke="#d8d000" stroke-width="0.8" opacity="0.6"/><line x1="1253.0" y1="408.0" x2="1268.0" y2="395.0" stroke="#b0a800" stroke-width="8.6" stroke-linecap="square"/><line x1="1253.0" y1="408.0" x2="1268.0" y2="395.0" stroke="#f6f200" stroke-width="7" stroke-linecap="square"/><line x1="1253.0" y1="408.0" x2="1268.0" y2="395.0" stroke="#d8d000" stroke-width="0.8" opacity="0.6"/><line x1="1268.0" y1="395.0" x2="1292.0" y2="370.0" stroke="#b0a800" stroke-width="8.6" stroke-linecap="square"/><line x1="1268.0" y1="395.0" x2="1292.0" y2="370.0" stroke="#f6f200" stroke-width="7" stroke-linecap="square"/><line x1="1268.0" y1="395.0" x2="1292.0" y2="370.0" stroke="#d8d000" stroke-width="0.8" opacity="0.6"/><polygon points="630.7,154.6 646.2,155.5 646.2,182.3 630.7,181.3" fill="rgb(229,195,0)" stroke="rgb(229,195,0)" stroke-width="0.6"/><polygon points="582.3,158.5 597.6,156.1 597.6,183.0 582.3,185.5" fill="rgb(229,195,0)" stroke="rgb(229,195,0)" stroke-width="0.6"/><polygon points="678.6,160.8 693.2,165.0 693.2,192.3 678.6,187.9" fill="rgb(229,195,0)" stroke="rgb(229,195,0)" stroke-width="0.6"/><polygon points="615.8,174.7 630.7,154.6 630.7,181.3 615.8,202.6" fill="rgb(229,195,0)" stroke="rgb(229,195,0)" stroke-width="0.6"/><polygon points="597.6,156.1 615.8,174.7 615.8,202.6 597.6,183.0" fill="rgb(229,195,0)" stroke="rgb(229,195,0)" stroke-width="0.6"/><polygon points="646.2,155.5 656.8,176.4 656.8,204.3 646.2,182.3" fill="rgb(229,195,0)" stroke="rgb(229,195,0)" stroke-width="0.6"/><polygon points="656.8,176.4 678.6,160.8 678.6,187.9 656.8,204.3" fill="rgb(229,195,0)" stroke="rgb(229,195,0)" stroke-width="0.6"/><polygon points="537.4,172.3 551.1,166.9 551.1,194.3 537.4,200.0" fill="rgb(229,195,0)" stroke="rgb(229,195,0)" stroke-width="0.6"/><polygon points="576.1,181.7 582.3,158.5 582.3,185.5 576.1,210.0" fill="rgb(239,205,0)" stroke="rgb(239,205,0)" stroke-width="0.6"/><polygon points="551.1,166.9 576.1,181.7 576.1,210.0 551.1,194.3" fill="rgb(229,195,0)" stroke="rgb(229,195,0)" stroke-width="0.6"/><polygon points="693.2,165.0 695.7,186.7 695.7,215.2 693.2,192.3" fill="rgb(229,195,0)" stroke="rgb(229,195,0)" stroke-width="0.6"/><polygon points="722.2,176.8 734.6,183.8 734.6,212.1 722.2,204.8" fill="rgb(229,195,0)" stroke="rgb(229,195,0)" stroke-width="0.6"/><polygon points="695.7,186.7 722.2,176.8 722.2,204.8 695.7,215.2" fill="rgb(229,195,0)" stroke="rgb(229,195,0)" stroke-width="0.6"/><polygon points="541.1,196.6 537.4,172.3 537.4,200.0 541.1,225.7" fill="rgb(255,222,0)" stroke="rgb(255,222,0)" stroke-width="0.6"/><polygon points="499.6,194.9 510.7,186.8 510.7,215.3 499.6,223.8" fill="rgb(229,195,0)" stroke="rgb(229,195,0)" stroke-width="0.6"/><polygon points="510.7,186.8 541.1,196.6 541.1,225.7 510.7,215.3" fill="rgb(229,195,0)" stroke="rgb(229,195,0)" stroke-width="0.6"/><polygon points="734.6,183.8 729.1,205.0 729.1,234.5 734.6,212.1" fill="rgb(229,195,0)" stroke="rgb(229,195,0)" stroke-width="0.6"/><polygon points="729.1,205.0 757.9,201.2 757.9,230.5 729.1,234.5" fill="rgb(229,195,0)" stroke="rgb(229,195,0)" stroke-width="0.6"/><polygon points="757.9,201.2 767.1,210.5 767.1,240.3 757.9,230.5" fill="rgb(229,195,0)" stroke="rgb(229,195,0)" stroke-width="0.6"/><polygon points="513.3,217.9 499.6,194.9 499.6,223.8 513.3,248.2" fill="rgb(255,234,0)" stroke="rgb(255,234,0)" stroke-width="0.6"/><polygon points="479.5,214.3 513.3,217.9 513.3,248.2 479.5,244.4" fill="rgb(229,195,0)" stroke="rgb(229,195,0)" stroke-width="0.6"/><polygon points="471.9,224.4 479.5,214.3 479.5,244.4 471.9,255.0" fill="rgb(229,195,0)" stroke="rgb(229,195,0)" stroke-width="0.6"/><polygon points="767.1,210.5 753.8,229.6 753.8,260.5 767.1,240.3" fill="rgb(236,202,0)" stroke="rgb(236,202,0)" stroke-width="0.6"/><polygon points="753.8,229.6 782.8,232.0 782.8,263.0 753.8,260.5" fill="rgb(229,195,0)" stroke="rgb(229,195,0)" stroke-width="0.6"/><polygon points="494.9,243.9 471.9,224.4 471.9,255.0 494.9,275.6" fill="rgb(255,240,0)" stroke="rgb(255,240,0)" stroke-width="0.6"/><polygon points="782.8,232.0 788.2,242.8 788.2,274.4 782.8,263.0" fill="rgb(229,195,0)" stroke="rgb(229,195,0)" stroke-width="0.6"/><polygon points="460.1,247.2 494.9,243.9 494.9,275.6 460.1,279.1" fill="rgb(229,195,0)" stroke="rgb(229,195,0)" stroke-width="0.6"/><polygon points="788.2,242.8 776.9,251.5 776.9,283.5 788.2,274.4" fill="rgb(251,215,0)" stroke="rgb(251,215,0)" stroke-width="0.6"/><polygon points="456.6,258.4 460.1,247.2 460.1,279.1 456.6,290.9" fill="rgb(238,203,0)" stroke="rgb(238,203,0)" stroke-width="0.6"/><polygon points="776.9,251.5 1207.0,269.5 1207.0,302.6 776.9,283.5" fill="rgb(229,195,0)" stroke="rgb(229,195,0)" stroke-width="0.6"/><polygon points="487.0,272.5 456.6,258.4 456.6,290.9 487.0,305.7" fill="rgb(255,242,0)" stroke="rgb(255,242,0)" stroke-width="0.6"/><polygon points="1207.0,269.5 1212.9,270.0 1212.9,303.1 1207.0,302.6" fill="rgb(229,195,0)" stroke="rgb(229,195,0)" stroke-width="0.6"/><polygon points="1212.9,270.0 1218.7,271.5 1218.7,304.6 1212.9,303.1" fill="rgb(229,195,0)" stroke="rgb(229,195,0)" stroke-width="0.6"/><polygon points="1218.7,271.5 1224.3,273.9 1224.3,307.2 1218.7,304.6" fill="rgb(229,195,0)" stroke="rgb(229,195,0)" stroke-width="0.6"/><polygon points="1224.3,273.9 1229.3,277.1 1229.3,310.6 1224.3,307.2" fill="rgb(229,195,0)" stroke="rgb(229,195,0)" stroke-width="0.6"/><polygon points="454.0,282.8 487.0,272.5 487.0,305.7 454.0,316.6" fill="rgb(229,195,0)" stroke="rgb(229,195,0)" stroke-width="0.6"/><polygon points="1229.3,277.1 1233.9,281.2 1233.9,314.9 1229.3,310.6" fill="rgb(229,195,0)" stroke="rgb(229,195,0)" stroke-width="0.6"/><polygon points="1233.9,281.2 1237.7,286.0 1237.7,320.0 1233.9,314.9" fill="rgb(229,195,0)" stroke="rgb(229,195,0)" stroke-width="0.6"/><polygon points="455.0,294.3 454.0,282.8 454.0,316.6 455.0,328.7" fill="rgb(255,220,0)" stroke="rgb(255,220,0)" stroke-width="0.6"/><polygon points="1237.7,286.0 1240.9,291.3 1240.9,325.6 1237.7,320.0" fill="rgb(229,195,0)" stroke="rgb(229,195,0)" stroke-width="0.6"/><polygon points="1240.9,291.3 1243.1,297.1 1243.1,331.7 1240.9,325.6" fill="rgb(229,195,0)" stroke="rgb(229,195,0)" stroke-width="0.6"/><polygon points="490.1,301.4 455.0,294.3 455.0,328.7 490.1,336.2" fill="rgb(255,240,0)" stroke="rgb(255,240,0)" stroke-width="0.6"/><polygon points="1243.1,297.1 1244.5,303.2 1244.5,338.2 1243.1,331.7" fill="rgb(229,195,0)" stroke="rgb(229,195,0)" stroke-width="0.6"/><polygon points="1244.5,303.2 1245.0,309.5 1245.0,344.8 1244.5,338.2" fill="rgb(229,195,0)" stroke="rgb(229,195,0)" stroke-width="0.6"/><polygon points="461.8,318.2 490.1,301.4 490.1,336.2 461.8,353.9" fill="rgb(229,195,0)" stroke="rgb(229,195,0)" stroke-width="0.6"/><polygon points="1245.0,309.5 1244.5,315.8 1244.5,351.4 1245.0,344.8" fill="rgb(229,195,0)" stroke="rgb(229,195,0)" stroke-width="0.6"/><polygon points="1244.5,315.8 1243.1,321.9 1243.1,357.8 1244.5,351.4" fill="rgb(229,195,0)" stroke="rgb(229,195,0)" stroke-width="0.6"/><polygon points="467.2,329.0 461.8,318.2 461.8,353.9 467.2,365.4" fill="rgb(255,232,0)" stroke="rgb(255,232,0)" stroke-width="0.6"/><polygon points="1243.1,321.9 1240.9,327.7 1240.9,363.9 1243.1,357.8" fill="rgb(229,195,0)" stroke="rgb(229,195,0)" stroke-width="0.6"/><polygon points="503.7,328.4 467.2,329.0 467.2,365.4 503.7,364.8" fill="rgb(255,237,0)" stroke="rgb(255,237,0)" stroke-width="0.6"/><polygon points="1240.9,327.7 1237.7,333.0 1237.7,369.6 1240.9,363.9" fill="rgb(232,198,0)" stroke="rgb(232,198,0)" stroke-width="0.6"/><polygon points="772.1,330.5 778.1,336.6 778.1,373.4 772.1,367.0" fill="rgb(229,195,0)" stroke="rgb(229,195,0)" stroke-width="0.6"/><polygon points="1237.7,333.0 1233.9,337.8 1233.9,374.6 1237.7,369.6" fill="rgb(240,205,0)" stroke="rgb(240,205,0)" stroke-width="0.6"/><polygon points="482.9,350.5 503.7,328.4 503.7,364.8 482.9,388.1" fill="rgb(229,195,0)" stroke="rgb(229,195,0)" stroke-width="0.6"/><polygon points="1233.9,337.8 1229.3,341.9 1229.3,378.9 1233.9,374.6" fill="rgb(248,212,0)" stroke="rgb(248,212,0)" stroke-width="0.6"/><polygon points="1206.0,349.6 772.1,330.5 772.1,367.0 1206.0,387.1" fill="rgb(255,238,0)" stroke="rgb(255,238,0)" stroke-width="0.6"/><polygon points="778.1,336.6 770.5,346.7 770.5,384.0 778.1,373.4" fill="rgb(238,204,0)" stroke="rgb(238,204,0)" stroke-width="0.6"/><polygon points="1229.3,341.9 1224.3,345.1 1224.3,382.4 1229.3,378.9" fill="rgb(255,219,0)" stroke="rgb(255,219,0)" stroke-width="0.6"/><polygon points="770.5,346.7 739.3,344.5 739.3,381.7 770.5,384.0" fill="rgb(255,238,0)" stroke="rgb(255,238,0)" stroke-width="0.6"/><polygon points="1224.3,345.1 1218.7,347.5 1218.7,384.9 1224.3,382.4" fill="rgb(255,225,0)" stroke="rgb(255,225,0)" stroke-width="0.6"/><polygon points="1218.7,347.5 1212.9,349.0 1212.9,386.5 1218.7,384.9" fill="rgb(255,230,0)" stroke="rgb(255,230,0)" stroke-width="0.6"/><polygon points="1212.9,349.0 1206.0,349.6 1206.0,387.1 1212.9,386.5" fill="rgb(255,235,0)" stroke="rgb(255,235,0)" stroke-width="0.6"/><polygon points="492.1,359.8 482.9,350.5 482.9,388.1 492.1,397.8" fill="rgb(255,239,0)" stroke="rgb(255,239,0)" stroke-width="0.6"/><polygon points="739.3,344.5 750.4,366.1 750.4,404.5 739.3,381.7" fill="rgb(229,195,0)" stroke="rgb(229,195,0)" stroke-width="0.6"/><polygon points="526.8,351.8 492.1,359.8 492.1,397.8 526.8,389.4" fill="rgb(255,231,0)" stroke="rgb(255,231,0)" stroke-width="0.6"/><polygon points="515.4,377.2 526.8,351.8 526.8,389.4 515.4,416.2" fill="rgb(231,197,0)" stroke="rgb(231,197,0)" stroke-width="0.6"/><polygon points="739.3,374.2 709.5,365.0 709.5,403.3 739.3,413.0" fill="rgb(255,241,0)" stroke="rgb(255,241,0)" stroke-width="0.6"/><polygon points="750.4,366.1 739.3,374.2 739.3,413.0 750.4,404.5" fill="rgb(253,217,0)" stroke="rgb(253,217,0)" stroke-width="0.6"/><polygon points="709.5,365.0 712.6,388.7 712.6,428.3 709.5,403.3" fill="rgb(229,195,0)" stroke="rgb(229,195,0)" stroke-width="0.6"/><polygon points="557.8,369.5 527.8,384.2 527.8,423.6 557.8,408.1" fill="rgb(255,223,0)" stroke="rgb(255,223,0)" stroke-width="0.6"/><polygon points="527.8,384.2 515.4,377.2 515.4,416.2 527.8,423.6" fill="rgb(255,242,0)" stroke="rgb(255,242,0)" stroke-width="0.6"/><polygon points="556.8,396.0 557.8,369.5 557.8,408.1 556.8,436.1" fill="rgb(250,214,0)" stroke="rgb(250,214,0)" stroke-width="0.6"/><polygon points="698.9,394.1 673.4,378.2 673.4,417.3 698.9,434.1" fill="rgb(255,242,0)" stroke="rgb(255,242,0)" stroke-width="0.6"/><polygon points="594.4,380.4 571.4,400.2 571.4,440.4 594.4,419.6" fill="rgb(249,213,0)" stroke="rgb(249,213,0)" stroke-width="0.6"/><polygon points="673.4,378.2 667.7,402.5 667.7,442.9 673.4,417.3" fill="rgb(229,195,0)" stroke="rgb(229,195,0)" stroke-width="0.6"/><polygon points="712.6,388.7 698.9,394.1 698.9,434.1 712.6,428.3" fill="rgb(255,226,0)" stroke="rgb(255,226,0)" stroke-width="0.6"/><polygon points="603.8,405.5 594.4,380.4 594.4,419.6 603.8,446.1" fill="rgb(255,229,0)" stroke="rgb(255,229,0)" stroke-width="0.6"/><polygon points="652.4,404.9 633.9,383.5 633.9,422.8 652.4,445.4" fill="rgb(255,238,0)" stroke="rgb(255,238,0)" stroke-width="0.6"/><polygon points="633.9,383.5 619.3,406.4 619.3,447.0 633.9,422.8" fill="rgb(234,200,0)" stroke="rgb(234,200,0)" stroke-width="0.6"/><polygon points="571.4,400.2 556.8,396.0 556.8,436.1 571.4,440.4" fill="rgb(255,241,0)" stroke="rgb(255,241,0)" stroke-width="0.6"/><polygon points="667.7,402.5 652.4,404.9 652.4,445.4 667.7,442.9" fill="rgb(255,233,0)" stroke="rgb(255,233,0)" stroke-width="0.6"/><polygon points="619.3,406.4 603.8,405.5 603.8,446.1 619.3,447.0" fill="rgb(255,238,0)" stroke="rgb(255,238,0)" stroke-width="0.6"/><line x1="774.5" y1="376.8" x2="745.0" y2="405.9" stroke="#dd0000" stroke-width="1.4"/><line x1="774.5" y1="370.8" x2="745.0" y2="407.9" stroke="#dd0000" stroke-width="1.2"/><line x1="745.0" y1="406.9" x2="705.8" y2="428.3" stroke="#dd0000" stroke-width="1.4"/><line x1="745.0" y1="400.9" x2="705.8" y2="430.3" stroke="#dd0000" stroke-width="1.2"/><line x1="705.8" y1="429.3" x2="660.1" y2="441.3" stroke="#dd0000" stroke-width="1.4"/><line x1="705.8" y1="423.3" x2="660.1" y2="443.3" stroke="#dd0000" stroke-width="1.2"/><line x1="660.1" y1="442.3" x2="611.5" y2="443.7" stroke="#dd0000" stroke-width="1.4"/><line x1="660.1" y1="436.3" x2="611.5" y2="445.7" stroke="#dd0000" stroke-width="1.2"/><line x1="611.5" y1="444.7" x2="564.0" y2="435.4" stroke="#dd0000" stroke-width="1.4"/><line x1="611.5" y1="438.7" x2="564.0" y2="437.4" stroke="#dd0000" stroke-width="1.2"/><line x1="564.0" y1="436.4" x2="521.5" y2="417.0" stroke="#dd0000" stroke-width="1.4"/><line x1="564.0" y1="430.4" x2="521.5" y2="419.0" stroke="#dd0000" stroke-width="1.2"/><line x1="521.5" y1="418.0" x2="487.3" y2="390.0" stroke="#dd0000" stroke-width="1.4"/><line x1="521.5" y1="412.0" x2="487.3" y2="392.0" stroke="#dd0000" stroke-width="1.2"/><line x1="487.3" y1="391.0" x2="464.3" y2="356.7" stroke="#dd0000" stroke-width="1.4"/><line x1="487.3" y1="385.0" x2="464.3" y2="358.7" stroke="#dd0000" stroke-width="1.2"/><line x1="774.5" y1="374.8" x2="705.8" y2="425.3" stroke="#dd0000" stroke-width="1.1"/><line x1="745.0" y1="404.9" x2="660.1" y2="438.3" stroke="#dd0000" stroke-width="1.1"/><line x1="705.8" y1="427.3" x2="611.5" y2="440.7" stroke="#dd0000" stroke-width="1.1"/><line x1="660.1" y1="440.3" x2="564.0" y2="432.4" stroke="#dd0000" stroke-width="1.1"/><line x1="611.5" y1="442.7" x2="521.5" y2="414.0" stroke="#dd0000" stroke-width="1.1"/><line x1="564.0" y1="434.4" x2="487.3" y2="387.0" stroke="#dd0000" stroke-width="1.1"/><line x1="521.5" y1="416.0" x2="464.3" y2="353.7" stroke="#dd0000" stroke-width="1.1"/><ellipse cx="774.5" cy="376.8" rx="6" ry="3.5" fill="#22e850"/><ellipse cx="775.5" cy="364.8" rx="5" ry="2.2" fill="#22e850"/><ellipse cx="745.0" cy="406.9" rx="6" ry="3.5" fill="#22e850"/><ellipse cx="746.0" cy="394.9" rx="5" ry="2.2" fill="#22e850"/><ellipse cx="705.8" cy="429.3" rx="6" ry="3.5" fill="#22e850"/><ellipse cx="706.8" cy="417.3" rx="5" ry="2.2" fill="#22e850"/><ellipse cx="660.1" cy="442.3" rx="6" ry="3.5" fill="#22e850"/><ellipse cx="661.1" cy="430.3" rx="5" ry="2.2" fill="#22e850"/><ellipse cx="611.5" cy="444.7" rx="6" ry="3.5" fill="#22e850"/><ellipse cx="612.5" cy="432.7" rx="5" ry="2.2" fill="#22e850"/><ellipse cx="564.0" cy="436.4" rx="6" ry="3.5" fill="#22e850"/><ellipse cx="565.0" cy="424.4" rx="5" ry="2.2" fill="#22e850"/><ellipse cx="521.5" cy="418.0" rx="6" ry="3.5" fill="#22e850"/><ellipse cx="522.5" cy="406.0" rx="5" ry="2.2" fill="#22e850"/><ellipse cx="487.3" cy="391.0" rx="6" ry="3.5" fill="#22e850"/><ellipse cx="488.3" cy="379.0" rx="5" ry="2.2" fill="#22e850"/><ellipse cx="464.3" cy="357.7" rx="6" ry="3.5" fill="#22e850"/><ellipse cx="465.3" cy="345.7" rx="5" ry="2.2" fill="#22e850"/><polygon points="776.9,251.5 1207.0,269.5 1212.9,270.0 1218.7,271.5 1224.3,273.9 1229.3,277.1 1233.9,281.2 1237.7,286.0 1240.9,291.3 1243.1,297.1 1244.5,303.2 1245.0,309.5 1244.5,315.8 1243.1,321.9 1240.9,327.7 1237.7,333.0 1233.9,337.8 1229.3,341.9 1224.3,345.1 1218.7,347.5 1212.9,349.0 1206.0,349.6 772.1,330.5 778.1,336.6 770.5,346.7 739.3,344.5 750.4,366.1 739.3,374.2 709.5,365.0 712.6,388.7 698.9,394.1 673.4,378.2 667.7,402.5 652.4,404.9 633.9,383.5 619.3,406.4 603.8,405.5 594.4,380.4 571.4,400.2 556.8,396.0 557.8,369.5 527.8,384.2 515.4,377.2 526.8,351.8 492.1,359.8 482.9,350.5 503.7,328.4 467.2,329.0 461.8,318.2 490.1,301.4 455.0,294.3 454.0,282.8 487.0,272.5 456.6,258.4 460.1,247.2 494.9,243.9 471.9,224.4 479.5,214.3 513.3,217.9 499.6,194.9 510.7,186.8 541.1,196.6 537.4,172.3 551.1,166.9 576.1,181.7 582.3,158.5 597.6,156.1 615.8,174.7 630.7,154.6 646.2,155.5 656.8,176.4 678.6,160.8 693.2,165.0 695.7,186.7 722.2,176.8 734.6,183.8 729.1,205.0 757.9,201.2 767.1,210.5 753.8,229.6 782.8,232.0 788.2,242.8" fill="url(#inf)" stroke="#ffe000" stroke-width="5.5" stroke-linejoin="miter" stroke-miterlimit="4"/><ellipse cx="625.5" cy="284.5" rx="37.5" ry="29" fill="none" stroke="#f0d400" stroke-width="6"/><ellipse cx="1187.3" cy="311" rx="28.5" ry="22.5" fill="none" stroke="#f5d800" stroke-width="5.5"/><line x1="544" y1="169" x2="606.6" y2="255" stroke="#e00000" stroke-width="1.6"/><line x1="520.6" y1="213" x2="619" y2="402.8" stroke="#e00000" stroke-width="1.6"/><line x1="608.7" y1="313" x2="571.8" y2="392" stroke="#e00000" stroke-width="1.6"/><line x1="660.8" y1="262" x2="1155" y2="308" stroke="#e00000" stroke-width="1.6"/><line x1="666" y1="286" x2="1197" y2="327.7" stroke="#e00000" stroke-width="1.6"/><line x1="640" y1="311" x2="1155" y2="310" stroke="#e00000" stroke-width="1.6"/><line x1="788.4" y1="236" x2="903" y2="254" stroke="#e00000" stroke-width="1.6"/><line x1="1094" y1="271.7" x2="1160.7" y2="294.5" stroke="#e00000" stroke-width="1.6"/><line x1="1136" y1="272.4" x2="1154" y2="303.6" stroke="#e00000" stroke-width="1.6"/><line x1="1211.5" y1="318" x2="1236" y2="323.8" stroke="#e00000" stroke-width="1.6"/><line x1="471.5" y1="447.6" x2="298" y2="593" stroke="#e00000" stroke-width="1.6"/><line x1="471.5" y1="447.6" x2="513.5" y2="423.8" stroke="#e00000" stroke-width="1.6"/><line x1="780" y1="368" x2="1041" y2="364" stroke="#e00000" stroke-width="1.6"/><line x1="544" y1="169" x2="686" y2="163" stroke="#e00000" stroke-width="1.6"/><line x1="686" y1="163" x2="786" y2="240" stroke="#e00000" stroke-width="1.6"/><line x1="494" y1="213" x2="544" y2="169" stroke="#e00000" stroke-width="1.6"/><line x1="465" y1="244" x2="494" y2="213" stroke="#e00000" stroke-width="1.6"/><line x1="458" y1="300" x2="465" y2="244" stroke="#e00000" stroke-width="1.6"/><line x1="465" y1="296" x2="585.8" y2="273.3" stroke="#e00000" stroke-width="1.4" stroke-dasharray="6 3"/><line x1="665" y1="294" x2="731.7" y2="356.7" stroke="#e00000" stroke-width="1.4" stroke-dasharray="3 2"/><ellipse cx="1094" cy="271" rx="5" ry="3.5" fill="#22e850"/><ellipse cx="1134" cy="272" rx="5" ry="3.5" fill="#22e850"/><ellipse cx="1156" cy="306" rx="5" ry="4" fill="#22e850"/><ellipse cx="1198" cy="340" rx="4" ry="3" fill="#22e850"/><ellipse cx="1213" cy="338" rx="4" ry="2.5" fill="#22e850"/><ellipse cx="1240" cy="330" rx="3" ry="6" fill="#22e850"/><ellipse cx="1238" cy="350" rx="3" ry="5" fill="#22e850"/><ellipse cx="1068" cy="352" rx="5" ry="2.5" fill="#22e850"/><ellipse cx="1072" cy="360" rx="5" ry="2.5" fill="#22e850"/><ellipse cx="1078" cy="367" rx="5" ry="2.5" fill="#22e850"/><ellipse cx="1074" cy="374" rx="4" ry="2.2" fill="#22e850"/><ellipse cx="1150" cy="357" rx="5" ry="2.5" fill="#22e850"/><ellipse cx="1162" cy="364" rx="5" ry="2.5" fill="#22e850"/><ellipse cx="1176" cy="360" rx="5" ry="2.5" fill="#22e850"/><ellipse cx="1185" cy="370" rx="5" ry="2.5" fill="#22e850"/><ellipse cx="1200" cy="366" rx="5" ry="2.5" fill="#22e850"/><ellipse cx="1208" cy="375" rx="5" ry="2.5" fill="#22e850"/><ellipse cx="1190" cy="380" rx="5" ry="2.3" fill="#22e850"/><ellipse cx="1165" cy="375" rx="5" ry="2.3" fill="#22e850"/><ellipse cx="1215" cy="382" rx="5" ry="2.3" fill="#22e850"/><ellipse cx="1228" cy="376" rx="4" ry="2.5" fill="#22e850"/><ellipse cx="786" cy="345" rx="4" ry="3" fill="#22e850"/><ellipse cx="784" cy="358" rx="4" ry="3" fill="#22e850"/><ellipse cx="776" cy="350" rx="3" ry="3" fill="#22e850"/><ellipse cx="544" cy="176" rx="5" ry="4" fill="#22e850"/><ellipse cx="538" cy="186" rx="4" ry="4" fill="#22e850"/><ellipse cx="594" cy="165" rx="3" ry="3" fill="#22e850"/><ellipse cx="686" cy="168" rx="4" ry="3" fill="#22e850"/><ellipse cx="700" cy="190" rx="3" ry="3" fill="#22e850"/><ellipse cx="745" cy="212" rx="4" ry="3" fill="#22e850"/><ellipse cx="770" cy="232" rx="4" ry="3" fill="#22e850"/><ellipse cx="786" cy="246" rx="3" ry="3" fill="#22e850"/><ellipse cx="508" cy="205" rx="4" ry="4" fill="#22e850"/><ellipse cx="500" cy="215" rx="4" ry="4" fill="#22e850"/><ellipse cx="485" cy="232" rx="4" ry="4" fill="#22e850"/><ellipse cx="478" cy="245" rx="4" ry="4" fill="#22e850"/><ellipse cx="466" cy="268" rx="4" ry="4" fill="#22e850"/><ellipse cx="462" cy="290" rx="4" ry="3" fill="#22e850"/><ellipse cx="464" cy="320" rx="4" ry="3" fill="#22e850"/><ellipse cx="470" cy="345" rx="4" ry="3" fill="#22e850"/><ellipse cx="478" cy="365" rx="4" ry="3" fill="#22e850"/><ellipse cx="462" cy="275" rx="3" ry="4" fill="#22e850"/><ellipse cx="604" cy="262" rx="4" ry="4" fill="#22e850"/><ellipse cx="610" cy="305" rx="4" ry="3" fill="#22e850"/><ellipse cx="652" cy="298" rx="4" ry="3" fill="#22e850"/><ellipse cx="640" cy="318" rx="4" ry="3" fill="#22e850"/><ellipse cx="590" cy="290" rx="3" ry="3" fill="#22e850"/><ellipse cx="600" cy="252" rx="3" ry="3" fill="#22e850"/><ellipse cx="468" cy="450" rx="6" ry="5" fill="#22e850"/><ellipse cx="455" cy="262" rx="3" ry="5" fill="#22e850"/><ellipse cx="452" cy="282" rx="3" ry="4" fill="#22e850"/><ellipse cx="456" cy="305" rx="4" ry="4" fill="#22e850"/><ellipse cx="452" cy="318" rx="3" ry="5" fill="#22e850"/><ellipse cx="458" cy="338" rx="4" ry="3" fill="#22e850"/><ellipse cx="462" cy="356" rx="4" ry="3" fill="#22e850"/><ellipse cx="470" cy="372" rx="5" ry="3" fill="#22e850"/><ellipse cx="480" cy="388" rx="5" ry="3" fill="#22e850"/><ellipse cx="492" cy="352" rx="4" ry="2.5" fill="#22e850"/><ellipse cx="478" cy="330" rx="4" ry="2.5" fill="#22e850"/><ellipse cx="470" cy="300" rx="4" ry="2.5" fill="#22e850"/><ellipse cx="466" cy="258" rx="3" ry="3" fill="#22e850"/><ellipse cx="512" cy="196" rx="4" ry="3" fill="#22e850"/><ellipse cx="532" cy="182" rx="4" ry="3" fill="#22e850"/><ellipse cx="488" cy="225" rx="3" ry="4" fill="#22e850"/><ellipse cx="476" cy="240" rx="3" ry="3" fill="#22e850"/><ellipse cx="760" cy="372" rx="4" ry="3" fill="#22e850"/><ellipse cx="745" cy="390" rx="4" ry="3" fill="#22e850"/><ellipse cx="775" cy="358" rx="3" ry="3" fill="#22e850"/><path d="M614,117 L617.2,246 A22.3,17 0 0 0 661.8,246 L658.6,117 Z" fill="#414141"/><rect x="622" y="117" width="10" height="130" fill="#4a4a4a" opacity="0.5"/><ellipse cx="636.3" cy="117" rx="22.3" ry="17" fill="#6b6b6b"/></svg><!--/SCENE-->

<!-- BOTTOM PANEL -->
<div class="grp" style="left:299px;top:622px;width:983px;height:100px"></div>
<!-- RIGHT TOOLBAR -->
<div class="a" style="left:1291px;top:66px;width:36px;height:657px;border-left:1px solid #fff;border-bottom:1px solid #a0a0a0;box-shadow:-1px 0 0 #d8d8d8"></div>

<!-- BOTTOM PANEL CONTENT -->
<div class="btn" style="left:311px;top:644px;width:122px;height:22px"><svg class="a" style="left:23px;top:4px" width="18" height="13"><path d="M0,0 L8,6.5 L0,13 Z M9,0 H12 V13 H9 Z M13.5,0 H16.5 V13 H13.5 Z" fill="#000"/></svg><span style="left:43px;top:3px;font-size:11px;letter-spacing:-0.15px">Play/Pause</span></div>
<div class="t" style="left:309px;top:684px;font-size:11px;letter-spacing:-0.3px">Speed:</div>
<div class="a" style="left:350px;top:689px;width:83px;height:3px;border-top:1px solid #b4b4b4;border-bottom:1px solid #fff;background:#e0e0e0"></div>
<div class="a" style="left:395px;top:682px;width:11px;height:18px;border:1px solid #707070;border-radius:2px;background:linear-gradient(90deg,#f6f6f6,#e2e2e2)"></div>

<div class="grp" style="left:451px;top:641px;width:141px;height:69px"></div>
<div class="lbl" style="left:455px;top:634px;font-size:11px;padding:0 3px">Show</div>
<div class="cb" style="left:462px;top:661px"><svg class="a" style="left:1px;top:0px;z-index:2" width="12" height="12"><path d="M2.2,6.2 L4.6,9.6 L9.6,1.6" fill="none" stroke="#4a5aa8" stroke-width="1.7"/></svg></div><div class="t" style="left:479px;top:661px;font-size:11px">Table</div>
<div class="cb" style="left:516px;top:661px"><svg class="a" style="left:1px;top:0px;z-index:2" width="12" height="12"><path d="M2.2,6.2 L4.6,9.6 L9.6,1.6" fill="none" stroke="#4a5aa8" stroke-width="1.7"/></svg></div><div class="t" style="left:533px;top:661px;font-size:11px">Rapids</div>
<div class="cb" style="left:462px;top:684px"><svg class="a" style="left:1px;top:0px;z-index:2" width="12" height="12"><path d="M2.2,6.2 L4.6,9.6 L9.6,1.6" fill="none" stroke="#4a5aa8" stroke-width="1.7"/></svg></div><div class="t" style="left:479px;top:684px;font-size:11px">Tool</div>
<div class="cb" style="left:516px;top:684px"><svg class="a" style="left:1px;top:0px;z-index:2" width="12" height="12"><path d="M2.2,6.2 L4.6,9.6 L9.6,1.6" fill="none" stroke="#4a5aa8" stroke-width="1.7"/></svg></div><div class="t" style="left:533px;top:684px;font-size:11px">Retracts</div>

<div class="grp" style="left:604px;top:641px;width:73px;height:69px"></div>
<div class="lbl" style="left:608px;top:634px;font-size:11px;padding:0 3px">Preview By</div>
<div class="a" style="left:615px;top:661px;width:13px;height:13px;border-radius:50%;border:1px solid #8e8f8f;background:radial-gradient(circle at 50% 50%,#e6e6e6 0,#f4f4f4 60%,#fff 100%)"></div><div class="t" style="left:633px;top:661px;font-size:11px">Layer</div>
<div class="a" style="left:615px;top:684px;width:13px;height:13px;border-radius:50%;border:1px solid #8e8f8f;background:#f0f0f0"><div class="a" style="left:2px;top:2px;width:7px;height:7px;border-radius:50%;background:radial-gradient(circle at 40% 35%,#7fd8ff 0,#1a8cd0 50%,#0a4f80 100%)"></div></div><div class="t" style="left:633px;top:684px;font-size:11px">Line</div>

<div class="t" style="left:687px;top:646px;font-size:11px;letter-spacing:-0.2px">Start</div>
<div class="a" style="left:726px;top:650px;width:453px;height:3px;border-top:1px solid #b4b4b4;border-bottom:1px solid #fff;background:#e0e0e0"></div>
<div class="a" style="left:726px;top:643px;width:11px;height:19px;border:1px solid #707070;border-radius:2px;background:linear-gradient(90deg,#f6f6f6,#e2e2e2)"></div>
<div class="t" style="left:693px;top:683px;font-size:11px;letter-spacing:-0.2px">End</div>
<div class="a" style="left:726px;top:687px;width:453px;height:3px;border-top:1px solid #b4b4b4;border-bottom:1px solid #fff;background:#e0e0e0"></div>
<div class="a" style="left:1096px;top:680px;width:11px;height:19px;border:1px solid #707070;border-radius:2px;background:linear-gradient(90deg,#f6f6f6,#e2e2e2)"></div>
<div class="cb" style="left:1195px;top:646px"></div><div class="t" style="left:1211px;top:646px;font-size:11px;letter-spacing:-0.35px">Link Sliders</div>
<div class="btn" style="left:1196px;top:679px;width:33px;height:22px"></div>
<div class="btn" style="left:1236px;top:679px;width:33px;height:22px"></div>
<svg class="a" style="left:1196px;top:679px" width="73" height="22"><path d="M10,11 L21,3 L21,19 Z" fill="#000"/><path d="M49,3 L60,11 L49,19 Z" fill="#000"/></svg>
<!--TB--><svg class="a" style="left:1288px;top:62px" width="40" height="400" viewBox="1288 62 40 400"><rect x="1296.0" y="68" width="1.6" height="1.6" fill="#a0a0a0"/><rect x="1299.6" y="68" width="1.6" height="1.6" fill="#a0a0a0"/><rect x="1303.2" y="68" width="1.6" height="1.6" fill="#a0a0a0"/><rect x="1306.8" y="68" width="1.6" height="1.6" fill="#a0a0a0"/><rect x="1310.4" y="68" width="1.6" height="1.6" fill="#a0a0a0"/><rect x="1314.0" y="68" width="1.6" height="1.6" fill="#a0a0a0"/><rect x="1317.6" y="68" width="1.6" height="1.6" fill="#a0a0a0"/><ellipse cx="1309" cy="99.5" rx="10" ry="1.6" fill="#000" opacity="0.10"/><polygon points="1297.5,82 1311,84.5 1310.5,100 1298.5,97" fill="#6e98c0"/><polygon points="1311,84.5 1319,81.5 1318.5,96 1310.5,100" fill="#5a86b0"/><polygon points="1297.5,82 1306,79 1319,81.5 1311,84.5" fill="#6e98c0"/><ellipse cx="1309" cy="129.5" rx="10" ry="1.6" fill="#000" opacity="0.10"/><polygon points="1297.5,112 1311,114.5 1310.5,130 1298.5,127" fill="#c4c4c4"/><polygon points="1311,114.5 1319,111.5 1318.5,126 1310.5,130" fill="#9a9a9a"/><polygon points="1297.5,112 1306,109 1319,111.5 1311,114.5" fill="#6e98c0"/><ellipse cx="1309" cy="159.5" rx="10" ry="1.6" fill="#000" opacity="0.10"/><polygon points="1297.5,142 1311,144.5 1310.5,160 1298.5,157" fill="#6e98c0"/><polygon points="1311,144.5 1319,141.5 1318.5,156 1310.5,160" fill="#9a9a9a"/><polygon points="1297.5,142 1306,139 1319,141.5 1311,144.5" fill="#d8d8d8"/><ellipse cx="1309" cy="189.5" rx="10" ry="1.6" fill="#000" opacity="0.10"/><polygon points="1297.5,172 1311,174.5 1310.5,190 1298.5,187" fill="#c4c4c4"/><polygon points="1311,174.5 1319,171.5 1318.5,186 1310.5,190" fill="#5a86b0"/><polygon points="1297.5,172 1306,169 1319,171.5 1311,174.5" fill="#d8d8d8"/><line x1="1297" y1="196.5" x2="1320" y2="196.5" stroke="#c8c8c8"/><rect x="1293.5" y="201.5" width="30" height="27" rx="3" fill="url(#selg)" stroke="#5a5a5a"/><polygon points="1298.5,209 1312,211.5 1311.5,227 1299.5,224" fill="#b9b9b9"/><polygon points="1312,211.5 1320,208.5 1319.5,223 1311.5,227" fill="#959595"/><polygon points="1298.5,209 1307,206 1320,208.5 1312,211.5" fill="#cccccc"/><g fill="none" stroke="#2a2a2a" stroke-width="0.9"><polygon points="1298,237 1311,239.5 1311,255 1299,252"/><polygon points="1311,239.5 1320,236.5 1319.5,251 1311,255"/><polygon points="1298,237 1306,233.5 1320,236.5 1311,239.5"/><polyline points="1306,233.5 1306,249 1299,252" opacity="0.6"/><line x1="1306" y1="249" x2="1319.5" y2="251" opacity="0.6"/></g><circle cx="1298" cy="266" r="1" fill="#4a62a0"/><circle cx="1306" cy="263.5" r="1" fill="#4a62a0"/><circle cx="1317" cy="266" r="1" fill="#4a62a0"/><circle cx="1309" cy="270" r="1" fill="#4a62a0"/><circle cx="1301" cy="272" r="1" fill="#4a62a0"/><circle cx="1313" cy="276" r="1" fill="#4a62a0"/><circle cx="1299" cy="280" r="1" fill="#4a62a0"/><circle cx="1307" cy="285" r="1" fill="#4a62a0"/><circle cx="1316" cy="282" r="1" fill="#4a62a0"/><polygon points="1298,308 1318,303 1306,315" fill="#8a8a8a"/><g stroke="#e02020" stroke-width="1.2" fill="#e02020"><line x1="1300" y1="308" x2="1299" y2="296"/><line x1="1305" y1="312" x2="1304.5" y2="299"/><line x1="1317" y1="306" x2="1316" y2="295"/><polygon points="1297,297 1299,292.5 1301,297" stroke="none"/><polygon points="1302.5,300 1304.5,295.5 1306.5,300" stroke="none"/><polygon points="1314,296 1316,291.5 1318,296" stroke="none"/></g><rect x="1293.5" y="321.5" width="30" height="27" rx="3" fill="url(#selg)" stroke="#5a5a5a"/><path d="M1312,324.5 a8,8 0 0 1 5.5,13.5 l-4.5,4.5 l-5,-5 l4.5,-4.5" fill="#555"/><circle cx="1311.5" cy="332" r="7.5" fill="#5a5a5a"/><path d="M1306,337 L1310,341 L1304,347 L1300,343 Z" fill="#5a5a5a"/><path d="M1301,341 l4,4 M1299.5,342.5 l4,4 M1302.5,339.5 l4,4" stroke="#d8d8d8" stroke-width="0.8"/><ellipse cx="1309" cy="329.5" rx="2.5" ry="1.5" fill="#888" transform="rotate(-40 1309 329.5)"/><line x1="1297" y1="352.5" x2="1320" y2="352.5" stroke="#c8c8c8"/><polygon points="1298,362 1311,364.5 1311,381 1299,378" fill="#c8c8c8"/><polygon points="1303,363 1311,364.5 1311,381 1303,379" fill="#b02a2a"/><g fill="none" stroke="#333" stroke-width="0.8"><polygon points="1311,364.5 1320,361.5 1319.5,377 1311,381"/><polygon points="1298,362 1306,358.5 1320,361.5 1311,364.5"/></g><line x1="1297" y1="389.5" x2="1320" y2="389.5" stroke="#c8c8c8"/><polygon points="1318.7,404.1 1318.7,408.9 1316.1,409.0 1315.5,410.5 1317.3,412.4 1313.9,415.8 1312.0,414.0 1310.5,414.6 1310.4,417.2 1305.6,417.2 1305.5,414.6 1304.0,414.0 1302.1,415.8 1298.7,412.4 1300.5,410.5 1299.9,409.0 1297.3,408.9 1297.3,404.1 1299.9,404.0 1300.5,402.5 1298.7,400.6 1302.1,397.2 1304.0,399.0 1305.5,398.4 1305.6,395.8 1310.4,395.8 1310.5,398.4 1312.0,399.0 1313.9,397.2 1317.3,400.6 1315.5,402.5 1316.1,404.0" fill="#5e5e5e"/><circle cx="1308" cy="406.5" r="5" fill="#efefef"/><polygon points="1297,429 1305,426 1320,428 1312,431" fill="#d0d0d0"/><polygon points="1297,429 1312,431 1312,437 1297,435" fill="#b8b8b8"/><polygon points="1312,431 1320,428 1320,434 1312,437" fill="#8e8e8e"/><polygon points="1299,435 1303,435.5 1303,449 1299,447" fill="#a8a8a8"/><polygon points="1306,436 1310,436.5 1310,450 1306,449" fill="#5c8ab8"/><polygon points="1313,435.5 1317,434 1317,448 1313,449.5" fill="#5c8ab8"/><defs><linearGradient id="selg" x1="0" y1="0" x2="0" y2="1"><stop offset="0" stop-color="#dedede"/><stop offset="1" stop-color="#c4c4c4"/></linearGradient></defs></svg><!--/TB-->
<!--IC--><svg class="a" style="left:70px;top:313px" width="32" height="30"><defs><linearGradient id="cf" x1="0" y1="0" x2="1" y2="1"><stop offset="0" stop-color="#c8c8c8"/><stop offset="1" stop-color="#a8a8a8"/></linearGradient></defs><polygon points="6.0,7.0 20.0,10.0 20.0,25.0 7.0,22.0" fill="url(#cf)"/><polygon points="20.0,10.0 27.0,6.5 26.5,21.0 20.0,25.0" fill="#8d8d8d"/><polygon points="6.0,7.0 13.0,4.0 27.0,6.5 20.0,10.0" fill="#d4d4d4"/><rect x="6" y="12.5" width="17" height="3.5" fill="#3a88d0"/><rect x="12.5" y="6" width="3.5" height="17" fill="#3a88d0"/></svg><svg class="a" style="left:180px;top:313px" width="32" height="30"><polygon points="6.0,7.0 20.0,10.0 20.0,25.0 7.0,22.0" fill="url(#cf)"/><polygon points="20.0,10.0 27.0,6.5 26.5,21.0 20.0,25.0" fill="#8d8d8d"/><polygon points="6.0,7.0 13.0,4.0 27.0,6.5 20.0,10.0" fill="#d4d4d4"/><rect x="6" y="12" width="17" height="4" fill="#e02828"/></svg><svg class="a" style="left:78px;top:351px" width="24" height="30"><polygon points="4,15 11,16.5 11,28 5,26" fill="#b4b4b4"/><polygon points="11,16.5 18,14.5 17.5,25.5 11,28" fill="#8e8e8e"/><polygon points="4,15 10,13 18,14.5 11,16.5" fill="#d0d0d0"/><rect x="9" y="3" width="4" height="7" fill="#3a88d0"/><polygon points="6,9 16,9 11,14" fill="#3a88d0"/></svg><svg class="a" style="left:182px;top:351px" width="30" height="30"><path d="M3,6 L3,19" stroke="#222" stroke-width="1.3"/><polygon points="0.5,7 3,3.5 5.5,7" fill="#222"/><polygon points="0.5,18 3,21.5 5.5,18" fill="#222"/><rect x="7" y="5" width="10" height="5" fill="#a8a8a8"/><rect x="18" y="6" width="5" height="4" fill="#c4c4c4"/><rect x="7" y="11" width="9" height="7" fill="#b8b8b8"/><rect x="17" y="12" width="7" height="4" fill="#c0c0c0"/><rect x="18" y="17" width="6" height="6" fill="#b4b4b4"/><path d="M6,24 L15,24" stroke="#222" stroke-width="1.3"/><polygon points="14,21.5 17.5,24 14,26.5" fill="#222"/></svg><svg class="a" style="left:79px;top:642px" width="26" height="30"><ellipse cx="13" cy="25.5" rx="10" ry="1.5" fill="#000" opacity="0.12"/><polygon points="11.9,6.5 11.9,8.5 10.7,8.5 10.2,9.7 11.0,10.6 9.6,12.0 8.7,11.2 7.5,11.7 7.5,12.9 5.5,12.9 5.5,11.7 4.3,11.2 3.4,12.0 2.0,10.6 2.8,9.7 2.3,8.5 1.1,8.5 1.1,6.5 2.3,6.5 2.8,5.3 2.0,4.4 3.4,3.0 4.3,3.8 5.5,3.3 5.5,2.1 7.5,2.1 7.5,3.3 8.7,3.8 9.6,3.0 11.0,4.4 10.2,5.3 10.7,6.5" fill="#8a8a8a"/><circle cx="6.5" cy="7.5" r="2.1" fill="#e8e8e8"/><polygon points="22.9,9.4 22.9,11.6 21.4,11.7 20.8,13.1 21.8,14.2 20.2,15.8 19.1,14.8 17.7,15.4 17.6,16.9 15.4,16.9 15.3,15.4 13.9,14.8 12.8,15.8 11.2,14.2 12.2,13.1 11.6,11.7 10.1,11.6 10.1,9.4 11.6,9.3 12.2,7.9 11.2,6.8 12.8,5.2 13.9,6.2 15.3,5.6 15.4,4.1 17.6,4.1 17.7,5.6 19.1,6.2 20.2,5.2 21.8,6.8 20.8,7.9 21.4,9.3" fill="#8a8a8a"/><circle cx="16.5" cy="10.5" r="2.5" fill="#e8e8e8"/><polygon points="13.4,20.2 13.4,21.8 12.4,21.8 12.0,22.8 12.7,23.6 11.6,24.7 10.8,24.0 9.8,24.4 9.8,25.4 8.2,25.4 8.2,24.4 7.2,24.0 6.4,24.7 5.3,23.6 6.0,22.8 5.6,21.8 4.6,21.8 4.6,20.2 5.6,20.2 6.0,19.2 5.3,18.4 6.4,17.3 7.2,18.0 8.2,17.6 8.2,16.6 9.8,16.6 9.8,17.6 10.8,18.0 11.6,17.3 12.7,18.4 12.0,19.2 12.4,20.2" fill="#8a8a8a"/><circle cx="9" cy="21" r="1.7" fill="#e8e8e8"/><rect x="3" y="13" width="17" height="3.5" fill="#3a88d0"/><rect x="8.5" y="8" width="3.5" height="14" fill="#3a88d0"/></svg><svg class="a" style="left:187px;top:642px" width="26" height="30"><ellipse cx="13" cy="25.5" rx="10" ry="1.5" fill="#000" opacity="0.12"/><polygon points="11.9,6.5 11.9,8.5 10.7,8.5 10.2,9.7 11.0,10.6 9.6,12.0 8.7,11.2 7.5,11.7 7.5,12.9 5.5,12.9 5.5,11.7 4.3,11.2 3.4,12.0 2.0,10.6 2.8,9.7 2.3,8.5 1.1,8.5 1.1,6.5 2.3,6.5 2.8,5.3 2.0,4.4 3.4,3.0 4.3,3.8 5.5,3.3 5.5,2.1 7.5,2.1 7.5,3.3 8.7,3.8 9.6,3.0 11.0,4.4 10.2,5.3 10.7,6.5" fill="#8a8a8a"/><circle cx="6.5" cy="7.5" r="2.1" fill="#e8e8e8"/><polygon points="22.9,9.4 22.9,11.6 21.4,11.7 20.8,13.1 21.8,14.2 20.2,15.8 19.1,14.8 17.7,15.4 17.6,16.9 15.4,16.9 15.3,15.4 13.9,14.8 12.8,15.8 11.2,14.2 12.2,13.1 11.6,11.7 10.1,11.6 10.1,9.4 11.6,9.3 12.2,7.9 11.2,6.8 12.8,5.2 13.9,6.2 15.3,5.6 15.4,4.1 17.6,4.1 17.7,5.6 19.1,6.2 20.2,5.2 21.8,6.8 20.8,7.9 21.4,9.3" fill="#8a8a8a"/><circle cx="16.5" cy="10.5" r="2.5" fill="#e8e8e8"/><polygon points="13.4,20.2 13.4,21.8 12.4,21.8 12.0,22.8 12.7,23.6 11.6,24.7 10.8,24.0 9.8,24.4 9.8,25.4 8.2,25.4 8.2,24.4 7.2,24.0 6.4,24.7 5.3,23.6 6.0,22.8 5.6,21.8 4.6,21.8 4.6,20.2 5.6,20.2 6.0,19.2 5.3,18.4 6.4,17.3 7.2,18.0 8.2,17.6 8.2,16.6 9.8,16.6 9.8,17.6 10.8,18.0 11.6,17.3 12.7,18.4 12.0,19.2 12.4,20.2" fill="#8a8a8a"/><circle cx="9" cy="21" r="1.7" fill="#e8e8e8"/><rect x="2" y="13" width="19" height="4" fill="#e02828"/></svg><svg class="a" style="left:70px;top:680px" width="28" height="30"><path d="M4,3 L15,3 L19,7 L19,25 L4,25 Z" fill="#e4e4e4" stroke="#c8c8c8" stroke-width="0.6"/><path d="M15,3 L15,7 L19,7" fill="#bdbdbd"/><path d="M6,9.0 H17" stroke="#c0c0c0" stroke-width="0.8" stroke-dasharray="2 1"/><path d="M6,11.6 H17" stroke="#c0c0c0" stroke-width="0.8" stroke-dasharray="2 1"/><path d="M6,14.2 H17" stroke="#c0c0c0" stroke-width="0.8" stroke-dasharray="2 1"/><path d="M6,16.8 H17" stroke="#c0c0c0" stroke-width="0.8" stroke-dasharray="2 1"/><path d="M6,19.4 H17" stroke="#c0c0c0" stroke-width="0.8" stroke-dasharray="2 1"/><path d="M6,22.0 H17" stroke="#c0c0c0" stroke-width="0.8" stroke-dasharray="2 1"/><rect x="13" y="19" width="12" height="3.5" fill="#3a88d0"/><rect x="17.25" y="14.5" width="3.5" height="12" fill="#3a88d0"/></svg><svg class="a" style="left:184px;top:680px" width="26" height="30"><ellipse cx="12" cy="26" rx="9" ry="1.6" fill="#000" opacity="0.15"/><polygon points="22.3,18.8 16.3,24.8 7.7,24.8 1.7,18.8 1.7,10.2 7.7,4.2 16.3,4.2 22.3,10.2" fill="url(#stopg)"/><defs><linearGradient id="stopg" x1="0" y1="0" x2="0" y2="1"><stop offset="0" stop-color="#d42020"/><stop offset="1" stop-color="#8a0808"/></linearGradient></defs><text x="12" y="17.6" text-anchor="middle" font-family="Liberation Sans" font-weight="bold" font-size="6.6" fill="#fff" letter-spacing="-0.2">STOP</text></svg><!--/IC-->
<svg class="a" style="left:1314px;top:733px" width="12" height="12"><g fill="#a8a8a8"><rect x="9" y="1" width="1.5" height="1.5"/><rect x="6" y="4" width="1.5" height="1.5"/><rect x="9" y="4" width="1.5" height="1.5"/><rect x="3" y="7" width="1.5" height="1.5"/><rect x="6" y="7" width="1.5" height="1.5"/><rect x="9" y="7" width="1.5" height="1.5"/></g></svg>
</body></html>
